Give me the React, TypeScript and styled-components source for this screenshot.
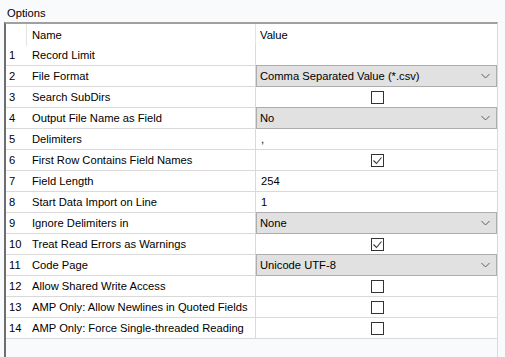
import React from "react"
import styled, { createGlobalStyle } from "styled-components"

type Kind = "blank" | "text" | "select" | "check"

interface Option {
  name: string
  kind: Kind
  value?: string
  checked?: boolean
}

const options: Option[] = [
  { name: "Record Limit", kind: "blank" },
  { name: "File Format", kind: "select", value: "Comma Separated Value (*.csv)" },
  { name: "Search SubDirs", kind: "check", checked: false },
  { name: "Output File Name as Field", kind: "select", value: "No" },
  { name: "Delimiters", kind: "text", value: "," },
  { name: "First Row Contains Field Names", kind: "check", checked: true },
  { name: "Field Length", kind: "text", value: "254" },
  { name: "Start Data Import on Line", kind: "text", value: "1" },
  { name: "Ignore Delimiters in", kind: "select", value: "None" },
  { name: "Treat Read Errors as Warnings", kind: "check", checked: true },
  { name: "Code Page", kind: "select", value: "Unicode UTF-8" },
  { name: "Allow Shared Write Access", kind: "check", checked: false },
  { name: "AMP Only: Allow Newlines in Quoted Fields", kind: "check", checked: false },
  { name: "AMP Only: Force Single-threaded Reading", kind: "check", checked: false },
]

export default function App() {
  return (
    <>
      <GlobalStyle />
      <Page>
        <Caption>Options</Caption>
        <Frame>
          <HeaderRow>
            <HeadCell $divider />
            <HeadCell $divider>Name</HeadCell>
            <HeadCell>Value</HeadCell>
          </HeaderRow>
          {options.map((opt, i) => (
            <Row key={opt.name}>
              <NumCell>{i + 1}</NumCell>
              <NameCell>{opt.name}</NameCell>
              <ValueCell $center={opt.kind === "check"}>
                {renderValue(opt)}
              </ValueCell>
            </Row>
          ))}
        </Frame>
      </Page>
    </>
  )
}

function renderValue(opt: Option) {
  if (opt.kind === "select") {
    return (
      <Select>
        <span>{opt.value}</span>
        <svg width="9" height="6" viewBox="0 0 9 6">
          <polyline points="0.5,1 4.5,5 8.5,1" fill="none" stroke="#5f5f5f" strokeWidth="1" />
        </svg>
      </Select>
    )
  }
  if (opt.kind === "check") {
    return (
      <CheckBox>
        {opt.checked && (
          <svg width="11" height="11" viewBox="0 0 11 11">
            <polyline points="1.5,5.5 4.5,8.5 9.5,2.5" fill="none" stroke="#3a3a3a" strokeWidth="1.1" />
          </svg>
        )}
      </CheckBox>
    )
  }
  if (opt.kind === "text") return <ValueText>{opt.value}</ValueText>
  return null
}

const GlobalStyle = createGlobalStyle`
  html, body {
    margin: 0;
    padding: 0;
    background: #f9fafc;
  }
  body {
    font-family: "Liberation Sans", Arial, sans-serif;
    font-size: 11.2px;
    color: #000;
  }
`

const Page = styled.div`
  width: 505px;
  height: 357px;
  overflow: hidden;
  display: flex;
  flex-direction: column;
`

const Caption = styled.div`
  height: 22px;
  line-height: 27px;
  padding-left: 7px;
`

const Frame = styled.div`
  margin-left: 4px;
  width: 491px;
  flex: 1;
  border-top: 2px solid #a0a0a0;
  border-left: 2px solid #6e6e6e;
  border-right: 1px solid #dadada;
  background: #f9fafc;
`

const columns = "21px 229px 241px"

const HeaderRow = styled.div`
  display: grid;
  grid-template-columns: ${columns};
  height: 21px;
  background: #fff;
`

const HeadCell = styled.div<{ $divider?: boolean }>`
  line-height: 22px;
  padding-left: ${p => (p.$divider ? 5 : 4)}px;
  border-right: ${p => (p.$divider ? "1px solid #e3e3e3" : "none")};
`

const Row = styled.div`
  display: grid;
  grid-template-columns: ${columns};
  height: 20px;
  background: #fff;
  border-bottom: 1px solid #d9d9d9;
`

const NumCell = styled.div`
  line-height: 20px;
  padding-left: 3px;
`

const NameCell = styled.div`
  line-height: 20px;
  padding-left: 5px;
  border-right: 1px solid #d9d9d9;
  white-space: nowrap;
`

const ValueCell = styled.div<{ $center?: boolean }>`
  display: flex;
  align-items: center;
  justify-content: ${p => (p.$center ? "center" : "flex-start")};
`

const ValueText = styled.span`
  line-height: 20px;
  padding-left: 5px;
`

const Select = styled.div`
  box-sizing: border-box;
  width: 100%;
  height: 22px;
  margin: -1px 0;
  display: flex;
  align-items: center;
  justify-content: space-between;
  padding: 0 6px 0 3px;
  background: #e1e1e1;
  border: 1px solid #adadad;
`

const CheckBox = styled.div`
  box-sizing: border-box;
  width: 13px;
  height: 13px;
  margin-left: 1px;
  border: 1px solid #333;
  background: #fff;
  display: flex;
  align-items: center;
  justify-content: center;
`
